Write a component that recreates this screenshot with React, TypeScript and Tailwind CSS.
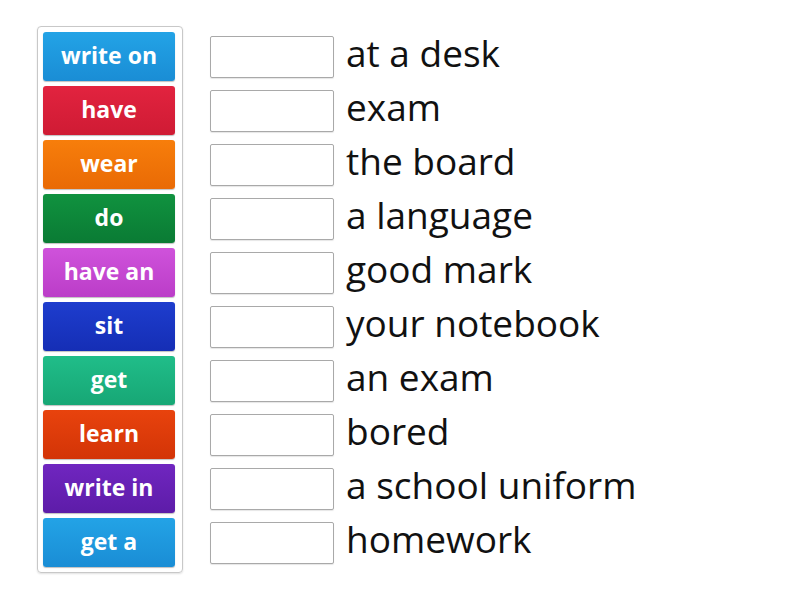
const tiles = [
  { label: "write on", cls: "bg-gradient-to-b from-[#23a3e6] to-[#1a8dd5]" },
  { label: "have", cls: "bg-gradient-to-b from-[#e2233f] to-[#cf1b34]" },
  { label: "wear", cls: "bg-gradient-to-b from-[#f77e0b] to-[#e96a05]" },
  { label: "do", cls: "bg-gradient-to-b from-[#10923f] to-[#0a7b34]" },
  { label: "have an", cls: "bg-gradient-to-b from-[#cf52db] to-[#bb3dc8]" },
  { label: "sit", cls: "bg-gradient-to-b from-[#1e3dce] to-[#152eb5]" },
  { label: "get", cls: "bg-gradient-to-b from-[#20bd89] to-[#17a775]" },
  { label: "learn", cls: "bg-gradient-to-b from-[#e8430d] to-[#d33407]" },
  { label: "write in", cls: "bg-gradient-to-b from-[#7026c0] to-[#5d1ca8]" },
  { label: "get a", cls: "bg-gradient-to-b from-[#23a3e6] to-[#1a8dd5]" },
];

const phrases = [
  "at a desk",
  "exam",
  "the board",
  "a language",
  "good mark",
  "your notebook",
  "an exam",
  "bored",
  "a school uniform",
  "homework",
];

export default function App() {
  return (
    <div className="w-[800px] h-[600px] bg-white font-['Open_Sans',sans-serif] flex items-start pl-[37px] pt-[26px]">
      {/* Word bank */}
      <div className="w-[146px] border border-[#c8c8c8] rounded-[4px] px-[5px] py-[5px] flex flex-col gap-[5px] shadow-[0_1px_2px_rgba(0,0,0,0.12)]">
        {tiles.map((t) => (
          <div
            key={t.label}
            className={`h-[49px] w-[132px] rounded-[3px] ${t.cls} flex items-center justify-center text-white text-[23px] font-bold shadow-[0_1px_1px_rgba(0,0,0,0.25)]`}
          >
            <span className="-mt-[3px]">{t.label}</span>
          </div>
        ))}
      </div>

      {/* Answer rows */}
      <div className="ml-[27px] pt-[4px] flex flex-col">
        {phrases.map((p) => (
          <div key={p} className="h-[54px] flex items-center">
            <div className="w-[124px] h-[42px] border border-[#a9a9a9] rounded-[2px] bg-white shadow-[0_1px_1px_rgba(0,0,0,0.1)]" />
            <span className="ml-[12px] text-[37px] leading-none text-[#111] -mt-[9px]">{p}</span>
          </div>
        ))}
      </div>
    </div>
  );
}
